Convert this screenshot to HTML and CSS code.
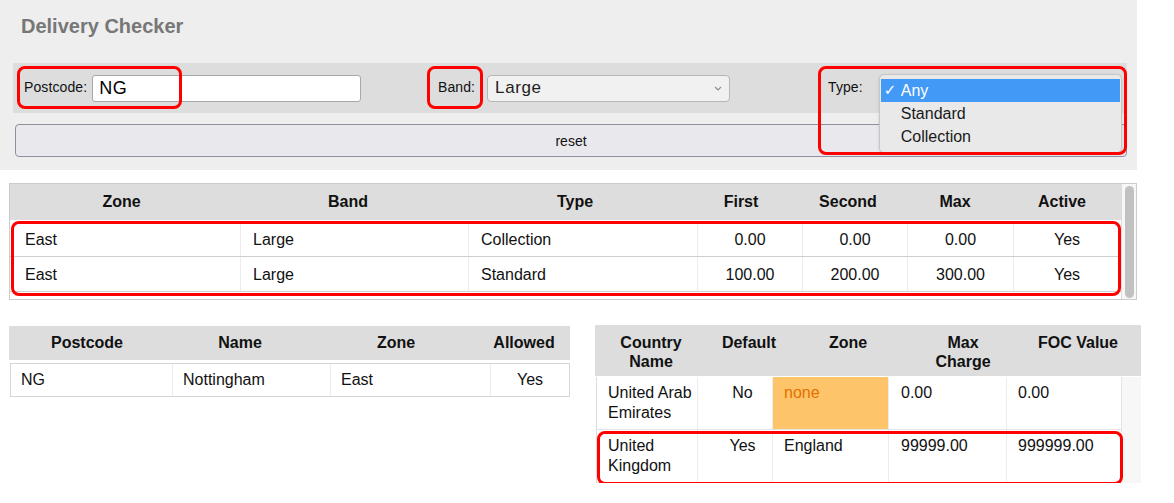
FILE: index.html
```html
<!DOCTYPE html>
<html lang="en">
<head>
<meta charset="utf-8">
<title>Delivery Checker</title>
<link rel="stylesheet" href="styles.css">
</head>
<body>
<div class="page">
  <header class="top">
    <h1 class="title">Delivery Checker</h1>
    <div class="filters">
      <div class="field f-postcode">
        <label class="lbl" for="pc">Postcode:</label>
        <input class="text-input" id="pc" type="text" value="NG">
      </div>
      <div class="field f-band">
        <span class="lbl">Band:</span>
        <div class="select">
          <span>Large</span>
          <svg class="chev" width="8" height="5" viewBox="0 0 8 5"><path d="M1 1 L4 4 L7 1" fill="none" stroke="#8a8a8a" stroke-width="1.1"/></svg>
        </div>
      </div>
      <div class="field f-type">
        <span class="lbl">Type:</span>
        <div class="combo">
          <ul class="listbox">
            <li class="option selected"><span class="check">✓</span>Any</li>
            <li class="option">Standard</li>
            <li class="option">Collection</li>
          </ul>
        </div>
      </div>
      <span class="mark mark-postcode"></span>
      <span class="mark mark-band"></span>
      <span class="mark mark-type"></span>
    </div>
    <button class="reset" type="button">reset</button>
  </header>

  <section class="rates">
    <div class="rates-main">
      <div class="thead">
        <div>Zone</div><div>Band</div><div>Type</div><div>First</div><div>Second</div><div>Max</div><div>Active</div>
      </div>
      <div class="row">
        <div class="cell">East</div><div class="cell">Large</div><div class="cell">Collection</div>
        <div class="cell num">0.00</div><div class="cell num">0.00</div><div class="cell num">0.00</div><div class="cell num">Yes</div>
      </div>
      <div class="row">
        <div class="cell">East</div><div class="cell">Large</div><div class="cell">Standard</div>
        <div class="cell num">100.00</div><div class="cell num">200.00</div><div class="cell num">300.00</div><div class="cell num">Yes</div>
      </div>
    </div>
    <div class="scroll"><div class="thumb"></div></div>
    <span class="mark mark-rates"></span>
  </section>

  <div class="lower">
    <section class="postcodes">
      <div class="thead">
        <div>Postcode</div><div>Name</div><div>Zone</div><div>Allowed</div>
      </div>
      <div class="tbody">
        <div class="row">
          <div class="cell">NG</div><div class="cell">Nottingham</div><div class="cell">East</div><div class="cell num">Yes</div>
        </div>
      </div>
    </section>

    <section class="countries">
      <div class="thead">
        <div>Country<br>Name</div><div>Default</div><div>Zone</div><div>Max<br>Charge</div><div>FOC Value</div>
      </div>
      <div class="tbody-wrap">
        <div class="tbody">
          <div class="row">
            <div class="cell">United Arab Emirates</div><div class="cell def">No</div><div class="cell zone none">none</div><div class="cell">0.00</div><div class="cell">0.00</div>
          </div>
          <div class="row">
            <div class="cell">United Kingdom</div><div class="cell def">Yes</div><div class="cell zone">England</div><div class="cell">99999.00</div><div class="cell">999999.00</div>
          </div>
        </div>
        <div class="track"></div>
      </div>
      <span class="mark mark-country"></span>
    </section>
  </div>
</div>
</body>
</html>
```
FILE: styles.css
```css
* { box-sizing: border-box; }

body {
  margin: 0;
  font-family: "Liberation Sans", Arial, Helvetica, sans-serif;
  color: #111;
  background: #fff;
}

/* ---------- top panel ---------- */
.top {
  width: 1137px;
  height: 170px;
  background: #eeeeee;
  padding-top: 15px;
}

.title {
  margin: 0 0 26px 21px;
  font-size: 20px;
  line-height: 22px;
  font-weight: bold;
  color: #777;
}

.filters {
  position: relative;
  display: flex;
  margin-left: 13px;
  width: 1114px;
  height: 50px;
  background: #dddddd;
}

.field {
  display: flex;
  align-items: center;
}

.f-postcode { width: 414px; padding-left: 11px; gap: 5px; }
.f-band { width: 391px; padding-left: 11px; gap: 12px; }
.f-type { flex: 1; padding-left: 10px; gap: 16px; }

.lbl {
  font-size: 14px;
  letter-spacing: 0.1px;
  color: #111;
  margin-top: -2px;
}

.text-input {
  width: 269px;
  height: 27px;
  margin: 0;
  padding: 0 6px;
  border: 1px solid #a8a8a8;
  border-radius: 3px;
  background: #fff;
  font-family: "Liberation Sans", Arial, sans-serif;
  font-size: 18px;
  letter-spacing: 0.5px;
  color: #000;
}

.select {
  width: 243px;
  height: 27px;
  display: flex;
  align-items: center;
  justify-content: space-between;
  padding: 0 7px;
  border: 1px solid #b6b6b6;
  border-radius: 4px;
  background: #f1f1f1;
  font-size: 17px;
  letter-spacing: 0.6px;
  color: #222;
}

.chev { margin-top: 1px; }

.combo {
  position: relative;
  width: 243px;
  height: 27px;
}

.listbox {
  position: absolute;
  top: -1px;
  left: 0;
  z-index: 2;
  width: 243px;
  margin: 0;
  padding: 4px 1px;
  list-style: none;
  background: #e9e9e9;
  border: 1px solid #c6c6c6;
  border-radius: 5px;
  box-shadow: 0 1px 3px rgba(0, 0, 0, 0.12);
}

.option {
  position: relative;
  height: 23px;
  line-height: 23px;
  padding-left: 20px;
  font-size: 16px;
  color: #1a1a1a;
}

.option.selected {
  background: #4399f6;
  color: #fff;
}

.check {
  position: absolute;
  left: 3px;
  top: 0;
  font-family: "DejaVu Sans", sans-serif;
  font-size: 15px;
}

.mark {
  position: absolute;
  z-index: 3;
  border: 3px solid #ff0000;
  border-radius: 8px;
  pointer-events: none;
}

.mark-postcode { left: 4px; top: 3px; width: 165px; height: 43px; }
.mark-band { left: 414px; top: 3px; width: 56px; height: 43px; }
.mark-type { left: 805px; top: 3px; width: 309px; height: 89px; }

.reset {
  display: block;
  margin: 11px 0 0 15px;
  width: 1112px;
  height: 33px;
  border: 1px solid #8f8f9d;
  border-radius: 4px;
  background: #e9e9ed;
  font-family: "Liberation Sans", Arial, sans-serif;
  font-size: 14px;
  color: #111;
}

/* ---------- shared table bits ---------- */
.thead {
  display: grid;
  background: #dddddd;
  font-size: 16px;
  font-weight: bold;
  text-align: center;
  color: #111;
}

.row {
  display: grid;
  font-size: 16px;
}

.cell {
  border-left: 1px solid #ececec;
  white-space: nowrap;
}

.cell:first-child { border-left: none; }

.num { text-align: center; }

/* ---------- rates table ---------- */
.rates {
  position: relative;
  display: flex;
  margin: 13px 0 0 9px;
  width: 1128px;
  border: 1px solid #cccccc;
}

.rates-main {
  width: 1111px;
  padding-bottom: 7px;
}

.rates .thead {
  grid-template-columns: 223px 230px 224px 108px 106px 108px 106px;
  height: 36px;
  line-height: 36px;
  margin-bottom: 2px;
}

.rates .row {
  grid-template-columns: 230px 228px 229px 105px 105px 106px 107px;
  height: 35px;
  line-height: 36px;
  border-bottom: 1px solid #cfcfcf;
}

.rates .cell { overflow: hidden; }
.rates .cell:nth-child(1) { padding-left: 15px; }
.rates .cell:nth-child(2),
.rates .cell:nth-child(3) { padding-left: 12px; }

.scroll {
  width: 15px;
  padding: 2px 2px 1px 3px;
  border-left: 1px solid #dddddd;
  background: #f7f7f7;
}

.thumb {
  height: 100%;
  background: #c1c1c1;
  border-radius: 5px;
}

.mark-rates { left: 1px; top: 37px; width: 1110px; height: 75px; }

/* ---------- lower tables ---------- */
.lower {
  display: flex;
  align-items: flex-start;
  margin-top: 25px;
}

.postcodes {
  margin: 1px 0 0 9px;
  width: 563px;
}

.postcodes .thead {
  grid-template-columns: 156px 150px 162px 94px;
  height: 34px;
  line-height: 34px;
  width: 561px;
}

.postcodes .tbody {
  margin: 3px 0 0 1px;
  width: 560px;
  border: 1px solid #d6d6d6;
}

.postcodes .row {
  grid-template-columns: 161px 158px 160px 79px;
  height: 32px;
  line-height: 32px;
}

.postcodes .cell { padding-left: 10px; }
.postcodes .cell.num { padding-left: 0; }

.countries {
  position: relative;
  margin-left: 23px;
  width: 546px;
}

.countries .thead {
  grid-template-columns: 108px 88px 110px 120px 110px;
  height: 51px;
  padding: 8px 0 0 2px;
  line-height: 19px;
}

.tbody-wrap {
  display: flex;
  margin-top: 1px;
}

.countries .tbody {
  width: 525px;
  margin-left: 1px;
  border-left: 1px solid #dddddd;
}

.countries .row {
  grid-template-columns: 100px 75px 116px 118px 114px;
  height: 53px;
  line-height: 20px;
  border-bottom: 1px solid #e3e3e3;
}

.countries .cell {
  padding: 6px 0 0 11px;
  white-space: normal;
}

.countries .cell.def { padding-left: 15px; text-align: center; }
.countries .cell:nth-child(4) { padding-left: 12px; }

.zone.none {
  background: #fec46a;
  color: #e27100;
}

.track {
  width: 20px;
  background: #f7f7f7;
  border-left: 1px solid #e4e4e4;
}

.mark-country { left: 2px; top: 106px; width: 526px; height: 54px; }
```
